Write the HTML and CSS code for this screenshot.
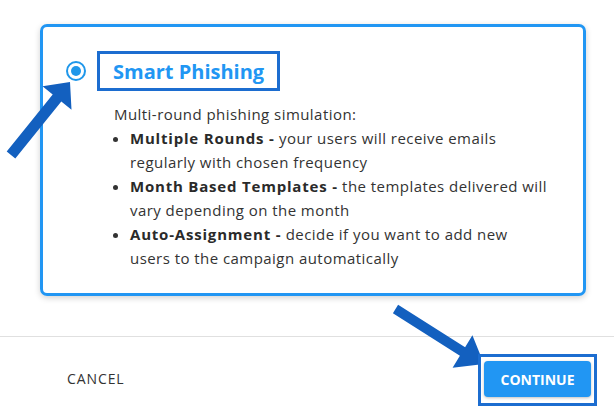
FILE: index.html
```html
<!DOCTYPE html>
<html>
<head>
<meta charset="utf-8">
<link rel="stylesheet" href="styles.css">
</head>
<body>
<div class="page">
  <div class="main">
    <div class="card">
      <div class="head">
        <span class="radio"><span class="radio-dot"></span></span>
        <div class="title-box"><span class="title">Smart Phishing</span></div>
      </div>
      <div class="desc">
        <p class="intro">Multi-round phishing simulation:</p>
        <ul class="list">
          <li><b>Multiple Rounds -</b> your users will receive emails regularly with chosen frequency</li>
          <li><b>Month Based Templates -</b> the templates delivered will vary depending on the month</li>
          <li><b>Auto-Assignment -</b> decide if you want to add new users to the campaign automatically</li>
        </ul>
      </div>
    </div>
  </div>
  <div class="footer">
    <span class="cancel">CANCEL</span>
    <div class="hl-box"><button class="continue">CONTINUE</button></div>
  </div>
  <svg class="arrows" width="614" height="415" viewBox="0 0 614 415">
    <polygon fill="#1360bf" points="6.7,151.5 52.7,94.5 42.5,86.3 70,82 71.5,109.7 61.3,101.5 15.3,158.5"/>
    <polygon fill="#1360bf" points="398.1,304.7 465.1,347.2 472.4,335.3 484,364 452.6,367.7 459.9,355.8 392.9,313.3"/>
  </svg>
</div>
</body>
</html>
```

FILE: styles.css
```css
html, body {
  margin: 0;
  padding: 0;
  background: #fff;
}
body {
  font-family: "Open Sans", Lato, sans-serif;
  color: #333;
}
.page {
  position: relative;
  width: 614px;
  height: 415px;
  overflow: hidden;
}
.main {
  padding: 24px 0 0 40px;
  height: 337px;
  box-sizing: border-box;
  border-bottom: 1px solid #e0e0e0;
}
.card {
  box-sizing: border-box;
  width: 546px;
  height: 272px;
  border: 3px solid #2196f3;
  border-radius: 7px;
  box-shadow: 0 2px 6px rgba(0, 0, 0, 0.18);
  padding: 24px 0 0 23px;
}
.head {
  display: flex;
  align-items: center;
  gap: 11px;
}
.radio {
  box-sizing: border-box;
  width: 20px;
  height: 20px;
  border: 2px solid #1f97ea;
  border-radius: 50%;
  display: flex;
  align-items: center;
  justify-content: center;
}
.radio-dot {
  width: 10px;
  height: 10px;
  border-radius: 50%;
  background: #1f97ea;
}
.title-box {
  box-sizing: border-box;
  width: 183px;
  height: 40px;
  border: 3px solid #1c6dd0;
  display: flex;
  align-items: center;
  padding-left: 13px;
}
.title {
  font-size: 20px;
  font-weight: 700;
  color: #2196f3;
}
.desc {
  padding-left: 48px;
  padding-top: 11px;
  font-size: 15px;
  line-height: 24px;
  letter-spacing: 0.45px;
}
.intro {
  margin: 0;
}
.list {
  margin: 0;
  padding-left: 16px;
  width: 422px;
}
.list b {
  font-weight: 700;
  color: #2a2a2a;
  letter-spacing: 0.8px;
}
.footer {
  display: flex;
  align-items: center;
  justify-content: space-between;
  padding: 17px 17px 0 67px;
}
.cancel {
  font-size: 14px;
  color: #333;
  letter-spacing: 0.9px;
  margin-top: -3px;
}
.hl-box {
  position: relative;
  z-index: 2;
  background: #fff;
  border: 3px solid #1c6dd0;
  padding: 4px 3px 6px 3px;
}
.continue {
  display: block;
  width: 107px;
  height: 36px;
  border: 0;
  border-radius: 4px;
  background: #2196f3;
  color: #fff;
  font-family: "Open Sans", Lato, sans-serif;
  font-size: 14px;
  font-weight: 700;
  box-shadow: 0 1px 3px rgba(0, 0, 0, 0.25);
  padding: 0;
}
.arrows {
  position: absolute;
  left: 0;
  top: 0;
  z-index: 1;
  pointer-events: none;
}
```
